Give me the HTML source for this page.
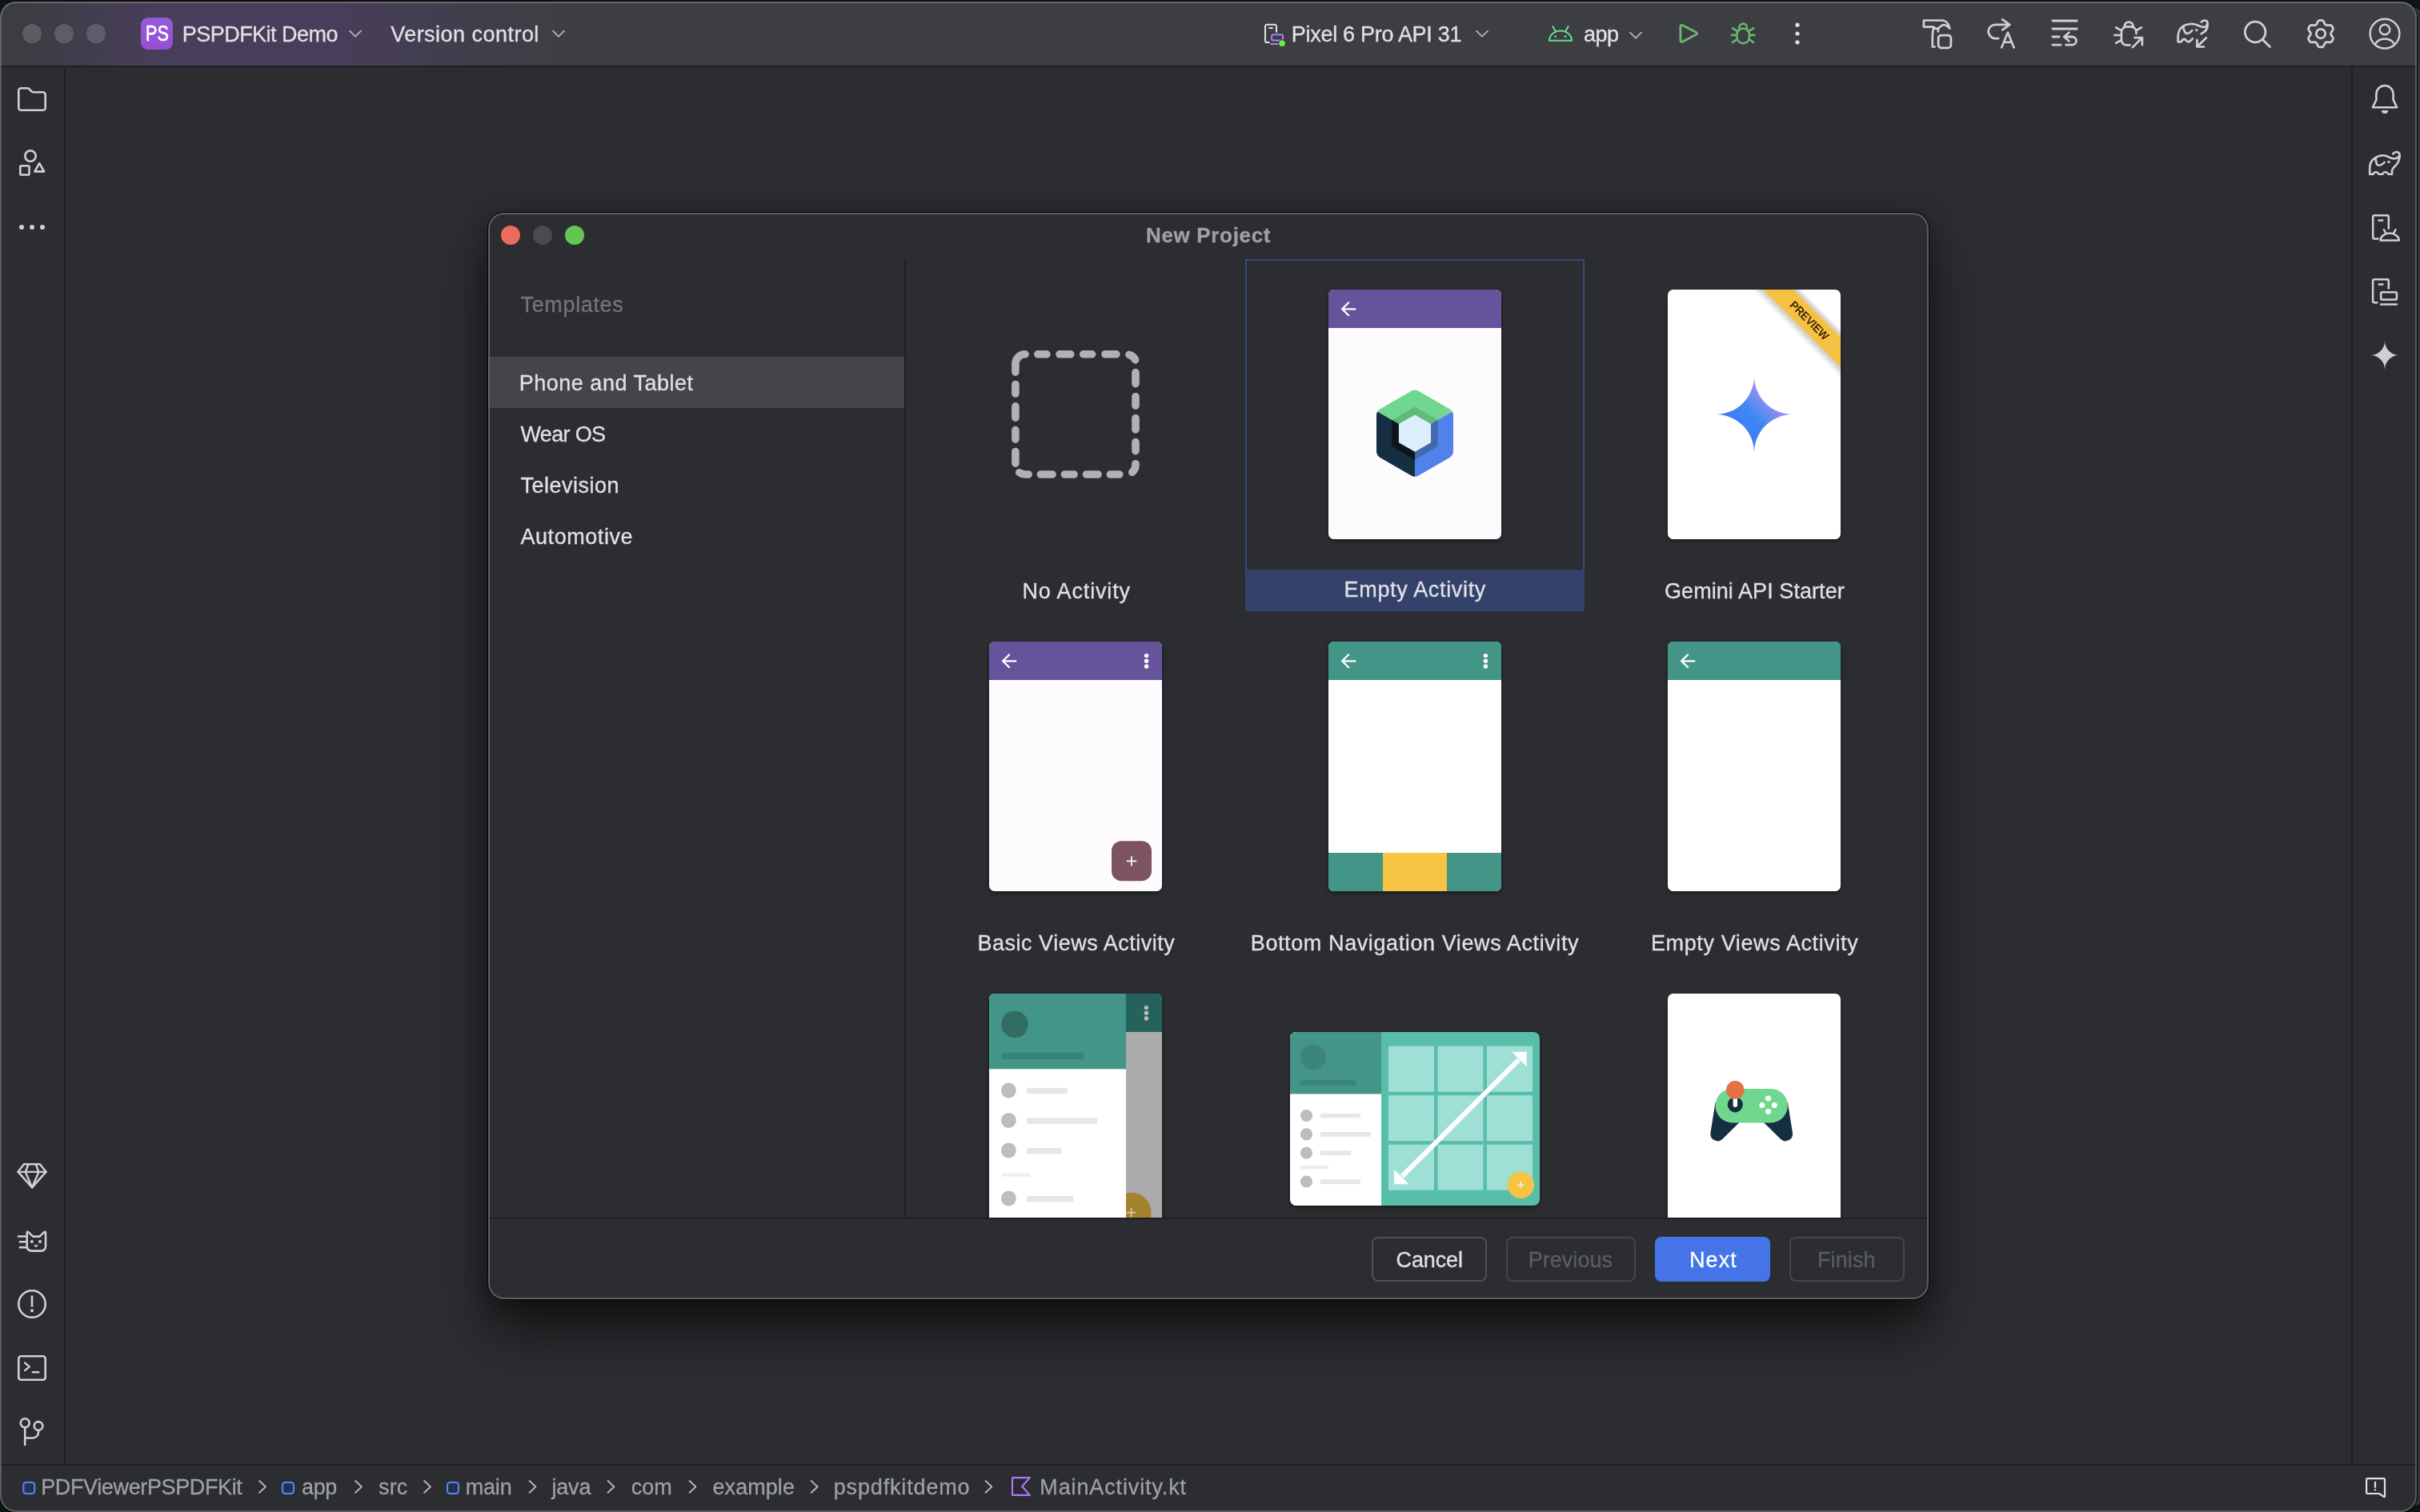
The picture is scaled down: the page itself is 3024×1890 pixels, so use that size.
<!DOCTYPE html>
<html><head><meta charset="utf-8"><title>New Project</title>
<style>
*{box-sizing:border-box;margin:0;padding:0}
html,body{width:3024px;height:1890px;overflow:hidden;background:#0c1713;font-family:"Liberation Sans",sans-serif}
.abs{position:absolute}
#win{position:absolute;left:0;top:2px;width:3020px;height:1888px;background:#2B2D30;border-radius:20px;overflow:hidden}
#winb{position:absolute;left:0;top:2px;width:3020px;height:1888px;border-radius:20px;box-shadow:inset 0 0 0 2px rgba(140,140,143,.5),inset 0 1.5px 0 rgba(255,255,255,.10);pointer-events:none}
#rightedge{position:absolute;left:3012px;top:8px;width:20px;height:1876px;border-radius:0 22px 22px 0;background:#323335;box-shadow:inset -1px 0 0 #000}
#tb{position:absolute;left:0;top:0;width:3020px;height:80px;background:
 linear-gradient(90deg,#3B3C40 0,#3D3C43 40px,#423D4E 110px,#473E59 190px,#483E5C 260px,#483E5B 400px,#453E55 480px,#413E4C 580px,#3E3E45 680px,#3C3E41 780px,#3C3E41 100%)}
#tbl{position:absolute;left:0;top:80px;width:3020px;height:2px;background:#1E1F22}
.vl{position:absolute;width:2px;background:#1E1F22}
.hl{position:absolute;height:2px;background:#1E1F22}
.tl{position:absolute;width:24px;height:24px;border-radius:50%}
.t{position:absolute;white-space:pre;line-height:1;-webkit-text-stroke-width:.3px}
#dlg{position:absolute;left:610px;top:266px;width:1800px;height:1358px;border-radius:20px;background:#2B2D30;
 box-shadow:0 0 0 1px #050506,0 40px 66px -4px rgba(0,0,0,.62),0 4px 28px rgba(0,0,0,.30);overflow:hidden}
#dlgb{position:absolute;left:610px;top:266px;width:1800px;height:1358px;border-radius:20px;box-shadow:inset 0 0 0 2px rgba(135,136,140,.55);pointer-events:none}
.btn{position:absolute;top:1546px;height:56px;border-radius:8px;border:2px solid #4E5157}
#ic{position:absolute;left:0;top:0;width:3024px;height:1890px;pointer-events:none}
#root{position:relative;width:3024px;height:1890px;overflow:hidden;background:#0c1713}
</style></head><body>
<div id="root">
<div id="rightedge"></div>
<div class="abs" style="left:-1.2px;top:.8px;width:3022.6px;height:1891px;border-radius:21.5px;background:#000"></div>
<div id="win">
  <div id="tb"></div><div id="tbl"></div>
  <!-- sidebars / status bar separators (coords relative to #win: y-2) -->
  <div class="vl" style="left:80px;top:82px;height:1746px"></div>
  <div class="vl" style="left:2938px;top:82px;height:1746px"></div>
  <div class="hl" style="left:0;top:1828px;width:3020px"></div>
</div>
<div id="winb"></div>
<!-- main window traffic lights -->
<div class="tl" style="left:28px;top:30px;background:#5d5c62"></div>
<div class="tl" style="left:68px;top:30px;background:#5f5c66"></div>
<div class="tl" style="left:108px;top:30px;background:#615c69"></div>
<!-- PS badge -->
<div class="abs" style="left:176px;top:22px;width:40px;height:40px;border-radius:9px;background:linear-gradient(180deg,#955ADB,#964FD4)"></div>

<!-- dialog -->
<div id="dlg">
  <div class="abs" style="left:0;top:180px;width:520px;height:64px;background:#43454A"></div>
  <div class="vl" style="left:520px;top:58px;height:1198px"></div>
  <div class="hl" style="left:0;top:1256px;width:1800px"></div>
  <!-- selected tile -->
  <div class="abs" style="left:946px;top:58px;width:424px;height:390px;border:2px solid #36497B"></div>
  <div class="abs" style="left:946px;top:446px;width:424px;height:52px;background:#34426B"></div>
</div>
<div id="dlgb"></div>
<div class="tl" style="left:626px;top:282px;background:#ED6A5E"></div>
<div class="tl" style="left:666px;top:282px;background:#4A4B4E"></div>
<div class="tl" style="left:706px;top:282px;background:#62C554"></div>
<!-- buttons -->
<div class="btn" style="left:1714px;width:144px"></div>
<div class="btn" style="left:1882px;width:162px;border-color:#45474C"></div>
<div class="btn" style="left:2068px;width:144px;background:#4574E8;border-color:#4574E8"></div>
<div class="btn" style="left:2236px;width:144px;border-color:#45474C"></div>
<div id="txt" style="position:absolute;left:0;top:0;width:3024px;height:1890px;will-change:transform">
<span class="t" style="left:227.7px;top:30.0px;font-size:27px;font-weight:400;color:#DFE1E5;letter-spacing:-0.52px">PSPDFKit Demo</span>
<span class="t" style="left:488.2px;top:30.0px;font-size:27px;font-weight:400;color:#DFE1E5;letter-spacing:0.47px">Version control</span>
<span class="t" style="left:1613.8px;top:30.0px;font-size:27px;font-weight:400;color:#DFE1E5;letter-spacing:-0.29px">Pixel 6 Pro API 31</span>
<span class="t" style="left:1979.0px;top:30.0px;font-size:27px;font-weight:400;color:#DFE1E5;letter-spacing:-0.53px">app</span>
<span class="t" style="left:1432.0px;top:280.9px;font-size:26px;font-weight:700;color:#9EA0A4;letter-spacing:0.66px">New Project</span>
<span class="t" style="left:650.6px;top:368.0px;font-size:27px;font-weight:400;color:#737579;letter-spacing:0.63px">Templates</span>
<span class="t" style="left:648.8px;top:466.0px;font-size:27px;font-weight:400;color:#DFE1E5;letter-spacing:0.50px">Phone and Tablet</span>
<span class="t" style="left:650.5px;top:530.0px;font-size:27px;font-weight:400;color:#DFE1E5;letter-spacing:-0.67px">Wear OS</span>
<span class="t" style="left:650.5px;top:594.0px;font-size:27px;font-weight:400;color:#DFE1E5;letter-spacing:0.49px">Television</span>
<span class="t" style="left:650.5px;top:658.0px;font-size:27px;font-weight:400;color:#DFE1E5;letter-spacing:0.55px">Automotive</span>
<span class="t" style="left:1277.5px;top:726.0px;font-size:27px;font-weight:400;color:#DFE1E5;letter-spacing:0.85px">No Activity</span>
<span class="t" style="left:1679.6px;top:724.0px;font-size:27px;font-weight:400;color:#DFE1E5;letter-spacing:0.67px">Empty Activity</span>
<span class="t" style="left:2080.0px;top:726.0px;font-size:27px;font-weight:400;color:#DFE1E5;letter-spacing:0.07px">Gemini API Starter</span>
<span class="t" style="left:1221.6px;top:1166.0px;font-size:27px;font-weight:400;color:#DFE1E5;letter-spacing:0.50px">Basic Views Activity</span>
<span class="t" style="left:1562.8px;top:1166.0px;font-size:27px;font-weight:400;color:#DFE1E5;letter-spacing:0.60px">Bottom Navigation Views Activity</span>
<span class="t" style="left:2063.0px;top:1166.0px;font-size:27px;font-weight:400;color:#DFE1E5;letter-spacing:0.61px">Empty Views Activity</span>
<span class="t" style="left:1744.6px;top:1562.0px;font-size:27px;font-weight:400;color:#DFE1E5;letter-spacing:-0.15px">Cancel</span>
<span class="t" style="left:1909.7px;top:1562.0px;font-size:27px;font-weight:400;color:#5A5D63;letter-spacing:0.04px">Previous</span>
<span class="t" style="left:2111.0px;top:1562.0px;font-size:27px;font-weight:400;color:#FFFFFF;letter-spacing:1.06px">Next</span>
<span class="t" style="left:2270.9px;top:1562.0px;font-size:27px;font-weight:400;color:#5A5D63;letter-spacing:0.13px">Finish</span>
<span class="t" style="left:51.2px;top:1846.4px;font-size:27px;font-weight:400;color:#9DA0A8;letter-spacing:-0.37px">PDFViewerPSPDFKit</span>
<span class="t" style="left:377.0px;top:1846.4px;font-size:27px;font-weight:400;color:#9DA0A8;letter-spacing:-0.33px">app</span>
<span class="t" style="left:473.0px;top:1846.4px;font-size:27px;font-weight:400;color:#9DA0A8;letter-spacing:0.15px">src</span>
<span class="t" style="left:581.7px;top:1846.4px;font-size:27px;font-weight:400;color:#9DA0A8;letter-spacing:-0.18px">main</span>
<span class="t" style="left:689.5px;top:1846.4px;font-size:27px;font-weight:400;color:#9DA0A8;letter-spacing:-0.21px">java</span>
<span class="t" style="left:788.7px;top:1846.4px;font-size:27px;font-weight:400;color:#9DA0A8;letter-spacing:-0.01px">com</span>
<span class="t" style="left:890.5px;top:1846.4px;font-size:27px;font-weight:400;color:#9DA0A8;letter-spacing:0.06px">example</span>
<span class="t" style="left:1041.7px;top:1846.4px;font-size:27px;font-weight:400;color:#9DA0A8;letter-spacing:0.85px">pspdfkitdemo</span>
<span class="t" style="left:1299.3px;top:1846.4px;font-size:27px;font-weight:400;color:#9DA0A8;letter-spacing:0.87px">MainActivity.kt</span>
<span class="t" style="left:181.8px;top:29.3px;font-size:27px;font-weight:400;color:#fff;-webkit-text-stroke:.7px #fff;transform-origin:0 0;transform:scaleX(.8)">PS</span>
</div>
<svg id="ic" viewBox="0 0 3024 1890" fill="none" stroke-linecap="round" stroke-linejoin="round">
<defs>
<clipPath id="cp"><rect x="0" y="0" width="216" height="312" rx="7"/></clipPath>
<clipPath id="cpl"><rect x="0" y="0" width="312" height="217" rx="8"/></clipPath>
<clipPath id="cpv"><rect x="1132" y="324" width="1278" height="1198"/></clipPath>
<linearGradient id="gem" x1="0" y1="1" x2="1" y2="0"><stop offset=".2" stop-color="#3B76F5"/><stop offset=".5" stop-color="#4189F2"/><stop offset=".7" stop-color="#9A8EF3"/><stop offset="1" stop-color="#AD8DF4"/></linearGradient>
<linearGradient id="rsh" gradientUnits="userSpaceOnUse" x1="167.5" y1="48.5" x2="160.5" y2="55.5"><stop offset="0" stop-color="#000" stop-opacity=".20"/><stop offset="1" stop-color="#000" stop-opacity="0"/></linearGradient>
<linearGradient id="rsh2" gradientUnits="userSpaceOnUse" x1="186.5" y1="29.5" x2="191.5" y2="24.5"><stop offset="0" stop-color="#223" stop-opacity=".26"/><stop offset="1" stop-color="#223" stop-opacity="0"/></linearGradient>
<filter id="ds" x="-10%" y="-10%" width="120%" height="120%"><feDropShadow dx="0" dy="2" stdDeviation="2.5" flood-color="#000" flood-opacity=".45"/></filter>
<mask id="hm"><polygon points="108.0,134.6 147.0,157.1 147.0,202.1 108.0,224.6 69.0,202.1 69.0,157.1" fill="#fff" stroke="#fff" stroke-width="18" stroke-linejoin="round"/></mask>
</defs>
<g transform="translate(1264,438)" stroke="#AFB1B3" stroke-width="9.6" stroke-linecap="round" fill="none">
<path d="M32.9,4.8H43.9M60,4.8H73.8M89.7,4.8H100.6M116.9,4.8H130.9M147,5.4A12,12 0 0 1 154.6,11.8M155,27.6V41.6M155,57.7V69M155,84.7V98.9M155,114.6V125.7M155,141.7V143.2A12,12 0 0 1 150.8,152.3M123.4,155H134.8M93.5,155H108.1M66.4,155H78.1M36.4,155H51M9.8,152.7A12,12 0 0 0 16.8,155H21.1M4.9,126.5V141.2M4.9,99.6V111.1M4.9,69.8V84.2M4.9,42.5V54M4.9,27.1V16.8A12,12 0 0 1 16.9,4.8H17"/></g>
<g transform="translate(1660,362)" filter="url(#ds)"><g clip-path="url(#cp)">
<rect width="216" height="312" fill="#FEFBFF"/><rect width="216" height="48" fill="#65539C"/><path d="M34.3,24.3H17.8M25.7,15.8L17.2,24.3L25.7,32.8" stroke="#fff" stroke-width="2.3" stroke-linecap="butt" stroke-linejoin="miter"/>
<g mask="url(#hm)">
<polygon points="108.0,179.6 38.7,139.6 108.0,99.6 177.3,139.6" fill="#70D78F"/>
<polygon points="108.0,179.6 108.0,259.6 38.7,219.6 38.7,139.6" fill="#132D42"/>
<polygon points="108.0,179.6 177.3,139.6 177.3,219.6 108.0,259.6" fill="#5181EB"/>
<polygon points="108.0,179.6 79.4,163.1 108.0,146.6 136.6,163.1" fill="#62B978"/>
<polygon points="108.0,179.6 108.0,212.6 79.4,196.1 79.4,163.1" fill="#07161D"/>
<polygon points="108.0,179.6 136.6,163.1 136.6,196.1 108.0,212.6" fill="#4369AC"/>
<polygon points="108.0,157.3 127.3,168.4 127.3,190.8 108.0,201.9 88.7,190.8 88.7,168.4" fill="#DCEEFC" stroke="#DCEEFC" stroke-width="1.5" stroke-linejoin="round"/>
</g>
</g></g>
<g transform="translate(2084,362)" filter="url(#ds)"><g clip-path="url(#cp)">
<rect width="216" height="312" fill="#fff"/>
<path transform="translate(108,156)" d="M0,-48A48,48 0 0 0 48,0A48,48 0 0 0 0,48A48,48 0 0 0 -48,0A48,48 0 0 0 0,-48Z" fill="url(#gem)"/>
<polygon points="119,0 216,97 216,111 105,0" fill="url(#rsh)"/>
<polygon points="157,0 216,59 216,49 167,0" fill="url(#rsh2)"/>
<polygon points="157,0 216,59 216,97 119,0" fill="#F5C142"/>
<text transform="translate(177.2,38.4) rotate(45)" text-anchor="middle" y="5.2" font-family="Liberation Sans, sans-serif" font-size="14.5" font-weight="700" fill="#3A2C04" stroke="none" textLength="62" lengthAdjust="spacingAndGlyphs">PREVIEW</text>
</g></g>
<g transform="translate(1236,802)" filter="url(#ds)"><g clip-path="url(#cp)">
<rect width="216" height="312" fill="#FEFBFF"/><rect width="216" height="48" fill="#65539C"/><path d="M34.3,24.3H17.8M25.7,15.8L17.2,24.3L25.7,32.8" stroke="#fff" stroke-width="2.3" stroke-linecap="butt" stroke-linejoin="miter"/><circle cx="196.6" cy="17.6" r="2.7" fill="#fff"/><circle cx="196.6" cy="24.3" r="2.7" fill="#fff"/><circle cx="196.6" cy="31" r="2.7" fill="#fff"/>
<rect x="153" y="249.2" width="50" height="50" rx="12.5" fill="#7D5260"/>
<path d="M171.8,274.4H184.2M178,268.2V280.6" stroke="#fff" stroke-width="1.7" stroke-linecap="butt"/>
</g></g>
<g transform="translate(1660,802)" filter="url(#ds)"><g clip-path="url(#cp)">
<rect width="216" height="312" fill="#fff"/><rect width="216" height="48" fill="#439587"/><path d="M34.3,24.3H17.8M25.7,15.8L17.2,24.3L25.7,32.8" stroke="#fff" stroke-width="2.3" stroke-linecap="butt" stroke-linejoin="miter"/><circle cx="196.4" cy="17.6" r="2.7" fill="#fff"/><circle cx="196.4" cy="24.3" r="2.7" fill="#fff"/><circle cx="196.4" cy="31" r="2.7" fill="#fff"/>
<rect y="264" width="216" height="48" fill="#439587"/><rect x="68" y="264" width="80" height="48" fill="#F4C443"/>
</g></g>
<g transform="translate(2084,802)" filter="url(#ds)"><g clip-path="url(#cp)">
<rect width="216" height="312" fill="#fff"/><rect width="216" height="48" fill="#439587"/><path d="M34.3,24.3H17.8M25.7,15.8L17.2,24.3L25.7,32.8" stroke="#fff" stroke-width="2.3" stroke-linecap="butt" stroke-linejoin="miter"/>
</g></g>
<g clip-path="url(#cpv)">
<g transform="translate(1236,1242)" filter="url(#ds)"><g clip-path="url(#cp)">
<rect width="216" height="312" fill="#ABABAB"/><rect x="171" width="45" height="48" fill="#28625B"/><circle cx="196.4" cy="17.6" r="2.7" fill="#B9BDBC"/><circle cx="196.4" cy="24.3" r="2.7" fill="#B9BDBC"/><circle cx="196.4" cy="31" r="2.7" fill="#B9BDBC"/>
<circle cx="177.6" cy="273.7" r="25" fill="#A5832D"/><path d="M171.8,273.7H183.4M177.6,267.9V279.5" stroke="#D9CFAE" stroke-width="1.6" stroke-linecap="butt"/>
<rect width="171" height="312" fill="#fff"/><rect width="171" height="94.3" fill="#439587"/>
<circle cx="32" cy="38.5" r="16.8" fill="#306D65"/><rect x="15" y="74.2" width="103" height="7.8" fill="#3A8277"/>
<circle cx="24.4" cy="121" r="9.4" fill="#BDBDBD"/><rect x="47.2" y="117.9" width="50.4" height="7.3" fill="#E6E6E6"/>
<circle cx="24.4" cy="158.5" r="9.4" fill="#BDBDBD"/><rect x="47.2" y="155.4" width="88" height="7.3" fill="#E6E6E6"/>
<circle cx="24.4" cy="196" r="9.4" fill="#BDBDBD"/><rect x="47.2" y="192.9" width="43" height="7.3" fill="#E6E6E6"/>
<circle cx="24.4" cy="256" r="9.4" fill="#BDBDBD"/><rect x="47.2" y="252.9" width="58" height="7.3" fill="#E6E6E6"/>
<rect x="16.6" y="224.3" width="35.3" height="4.4" fill="#F0F0F0"/>
</g></g>
<g transform="translate(1612,1290)" filter="url(#ds)"><g clip-path="url(#cpl)">
<rect width="312" height="217" fill="#59BDA9"/>
<rect x="123" y="17.7" width="57" height="57" fill="#9EE0D5"/>
<rect x="123" y="79.2" width="57" height="57" fill="#9EE0D5"/>
<rect x="123" y="140.7" width="57" height="57" fill="#9EE0D5"/>
<rect x="184.5" y="17.7" width="57" height="57" fill="#9EE0D5"/>
<rect x="184.5" y="79.2" width="57" height="57" fill="#9EE0D5"/>
<rect x="184.5" y="140.7" width="57" height="57" fill="#9EE0D5"/>
<rect x="246" y="17.7" width="57" height="57" fill="#9EE0D5"/>
<rect x="246" y="79.2" width="57" height="57" fill="#9EE0D5"/>
<rect x="246" y="140.7" width="57" height="57" fill="#9EE0D5"/>
<rect width="114" height="217" fill="#fff"/><rect width="114" height="77.4" fill="#439587"/>
<circle cx="28.9" cy="31.5" r="16" fill="#3A857A"/><rect x="12.9" y="59.7" width="69.1" height="7.4" fill="#3A857A"/>
<circle cx="20.5" cy="104.5" r="7.6" fill="#BDBDBD"/><rect x="38" y="101.7" width="49.9" height="5.7" fill="#E6E6E6"/>
<circle cx="20.5" cy="127.9" r="7.6" fill="#BDBDBD"/><rect x="38" y="125.10000000000001" width="63" height="5.7" fill="#E6E6E6"/>
<circle cx="20.5" cy="151.1" r="7.6" fill="#BDBDBD"/><rect x="38" y="148.29999999999998" width="38.3" height="5.7" fill="#E6E6E6"/>
<circle cx="20.5" cy="187" r="7.6" fill="#BDBDBD"/><rect x="38" y="184.2" width="49.9" height="5.7" fill="#E6E6E6"/>
<rect x="12.9" y="167" width="35.1" height="4.4" fill="#EEE"/>
<path d="M140,180.4L285.8,34.7" stroke="#fff" stroke-width="6" stroke-linecap="butt"/>
<polygon points="295.7,24.8 277.1,24.8 295.7,43.3" fill="#fff"/><polygon points="130.1,190.3 130.1,171.9 148.7,190.3" fill="#fff"/>
<circle cx="288.3" cy="191.3" r="16.7" fill="#F4C443"/><path d="M284,191.3H292.6M288.3,187V195.6" stroke="#fff" stroke-width="1.2" stroke-linecap="butt"/>
</g></g>
<g transform="translate(2084,1242)" filter="url(#ds)"><g clip-path="url(#cp)">
<rect width="216" height="312" fill="#fff"/>
<path d="M59.5,136L53.4,174.2A9,9 0 0 0 68.7,181.6L90,160.5V136Z" fill="#132D42"/>
<path d="M149.9,136L156,174.2A9,9 0 0 1 140.7,181.6L119.4,160.5V136Z" fill="#132D42"/>
<rect x="59.5" y="118.9" width="90.4" height="42.5" rx="21.25" fill="#70D78F"/>
<circle cx="84.3" cy="138.8" r="9.6" fill="#132D42"/>
<rect x="81.6" y="125" width="5.4" height="17" rx="2.7" fill="#fff"/>
<circle cx="84.3" cy="120.4" r="11.3" fill="#E57244"/>
<circle cx="125.5" cy="131" r="3.5" fill="#fff"/>
<circle cx="117.9" cy="139.4" r="3.5" fill="#fff"/>
<circle cx="133.3" cy="139.4" r="3.5" fill="#fff"/>
<circle cx="125.5" cy="147.2" r="3.5" fill="#fff"/>
</g></g>
</g>
<g stroke="#CED0D6" stroke-width="2.6" fill="none">
<path d="M23.3,113.3a3,3 0 0 1 3,-3h8.2a2.4,2.4 0 0 1 1.7,.7l3.6,3.6a2.4,2.4 0 0 0 1.7,.7h12.2a3,3 0 0 1 3,3v16.4a3,3 0 0 1 -3,3h-27.4a3,3 0 0 1 -3,-3z"/>
<circle cx="38" cy="195" r="6.7"/><rect x="25.3" y="207.3" width="11.2" height="11.2" rx="1.3"/><path d="M49.2,204.2L43.3,214.4H55.1Z"/>
<g fill="#CED0D6" stroke="none"><circle cx="27" cy="284" r="3"/><circle cx="40" cy="284" r="3"/><circle cx="53" cy="284" r="3"/></g>
<path d="M29.9,1455.3H49.8L57.6,1464.7L40.1,1484.4L22.5,1464.7Z" stroke-width="2.5"/><path d="M22.5,1464.9H57.6M35.5,1455.3L31.8,1465L40.1,1484.2M44.7,1455.3L48.4,1465L40.1,1484.2" stroke-width="2.4"/>
<path d="M33.7,1558V1541.3Q33.7,1538.6 35.8,1540.4L41.2,1545.6H49.5L54.9,1540.4Q57,1538.6 57,1541.3V1558A5.6,5.6 0 0 1 51.4,1563.6H39.3A5.6,5.6 0 0 1 33.7,1558Z"/>
<path d="M22.8,1545.4H32.5M24.8,1552.3H32.5M24.8,1559.3H32.5" stroke-width="2.5"/>
<g fill="#CED0D6" stroke="none"><circle cx="39.8" cy="1552" r="2"/><circle cx="50" cy="1552" r="2"/><path d="M41.9,1556.2H48L44.95,1559.6Z"/></g>
<circle cx="40" cy="1630" r="16.7"/><path d="M40,1620.5V1632.5"/><circle cx="40" cy="1638.3" r="2" fill="#CED0D6" stroke="none"/>
<rect x="23.3" y="1695.3" width="33.4" height="29.4" rx="3"/><path d="M31,1703.5L36.8,1708.3L31,1713.1M40.8,1715.2H48.4" stroke-width="2.4"/>
<circle cx="31.2" cy="1778.7" r="5.5"/><circle cx="48" cy="1782.4" r="5.3"/><path d="M31.2,1784.6V1806M48,1788V1790.5A7,7 0 0 1 41,1797.5H31.2"/>
<path d="M2964.9,134.2L2969.4,124.8V117.6A10.6,10.6 0 0 1 2990.6,117.6V124.8L2995.2,134.2Z"/>
<path d="M2975.9,138H2984.1A4.1,4.1 0 0 1 2975.9,138Z" fill="#CED0D6" stroke="none"/>
<path d="M2965.3,217.7H2961.2V210C2961.2,204.5 2963.5,200 2967.6,197.6C2972,194.4 2978,193.6 2982.5,195.2C2985.5,196.2 2987.5,198 2990.5,198.2C2994.5,198.4 2998.3,196.8 2998.6,194C2998.9,191.2 2996.3,189.8 2994,190C2992.3,190.2 2991,191.2 2990.3,192.3" />
<path d="M2998.6,194C2998.6,199.5 2997,203.5 2993.5,207C2990.5,209.8 2989,211 2989,214V217.7H2984.6Q2980.6,212.4 2977,217.7H2972.6Q2968.8,212.4 2965.3,217.7"/>
<path d="M2968.4,197.2C2968.6,200.5 2969.2,203.5 2970.2,205.6C2972.6,207.8 2976.6,206 2979.6,202.9"/>
<circle cx="2985" cy="202.4" r="1.7" fill="#CED0D6" stroke="none"/>
<path d="M2971.6,298.6H2967.2A2,2 0 0 1 2965.2,296.6V271.2A2,2 0 0 1 2967.2,269.2H2982.8A2,2 0 0 1 2984.8,271.2V285.6M2972.5,275.6H2977.3" stroke-width="2.5"/>
<path d="M2974.6,300.6A11.6,9 0 0 1 2997.8,300.6ZM2978.9,287.2L2981.6,292M2993.5,287.2L2990.8,292" stroke-width="2.5"/>
<path d="M2970.5,378.3H2967.1A2,2 0 0 1 2965.1,376.3V351.2A2,2 0 0 1 2967.1,349.2H2982.8A2,2 0 0 1 2984.8,351.2V360.5M2972.6,355.4H2977.4" stroke-width="2.5"/>
<rect x="2975.2" y="365.2" width="19.7" height="9.3" rx="1.5" stroke-width="2.6"/><path d="M2975.2,380.5H2994.9" stroke-width="2.5"/>
<path transform="translate(2980,444)" d="M0,-18A18,18 0 0 0 18,0A18,18 0 0 0 0,18A18,18 0 0 0 -18,0A18,18 0 0 0 0,-18Z" fill="#CED0D6" stroke="none"/>
</g>
<path d="M437,38.6L444,45.6L451,38.6" stroke="#B4B8BF" stroke-width="1.7"/>
<path d="M691,38.6L698,45.6L705,38.6" stroke="#B4B8BF" stroke-width="1.7"/>
<path d="M1845,38.6L1852,45.6L1859,38.6" stroke="#B4B8BF" stroke-width="1.7"/>
<path d="M2037,40.7L2044,47.7L2051,40.7" stroke="#B4B8BF" stroke-width="1.7"/>
<g stroke="#DFE1E5" stroke-width="2" fill="none"><path d="M1585.8,52.9H1583A2,2 0 0 1 1581,50.9V32.85A2,2 0 0 1 1583,30.85H1593A2,2 0 0 1 1595,32.85V40M1586.1,35H1589.9"/></g>
<g stroke="#B07EF7" stroke-width="2" fill="none"><rect x="1589.1" y="43.2" width="13.9" height="7.3" rx="2"/><path d="M1588,54.9H1598"/></g>
<circle cx="1602.1" cy="54.2" r="4.4" fill="#69EE50" stroke="#2E3A2E" stroke-width="1"/>
<g stroke="#6CDB93" stroke-width="2" fill="none"><path d="M1936,50.7A14,12.3 0 0 1 1964,50.7ZM1940.3,33L1943.8,39.3M1959.6,33L1956.2,39.3"/></g><circle cx="1943.6" cy="45.7" r="1.4" fill="#6CDB93"/><circle cx="1956.2" cy="45.7" r="1.4" fill="#6CDB93"/>
<path d="M2099.90,33.40Q2099.90,30.20 2102.74,31.68L2119.36,40.32Q2122.20,41.80 2119.36,43.28L2102.74,51.92Q2099.90,53.40 2099.90,50.20Z" stroke="#6BB56F" stroke-width="2.9" fill="none"/>
<g stroke="#6BB56F" stroke-width="2.6" fill="none"><rect x="2170.4" y="35.5" width="15.6" height="18.6" rx="7.8"/><path d="M2173.2,35.2A5,5.6 0 0 1 2183.2,35.2"/><path d="M2165,35.1L2170.6,38.8M2163.8,43.9H2170.2M2165,52.9L2170.6,49.2M2191.2,35.1L2185.6,38.8M2192.4,43.9H2186M2191.2,52.9L2185.6,49.2"/></g>
<g fill="#DFE1E5"><circle cx="2246" cy="31.2" r="2.6"/><circle cx="2246" cy="42" r="2.6"/><circle cx="2246" cy="52.8" r="2.6"/></g>
<g stroke="#CED0D6" stroke-width="2.8" fill="none">
<path d="M2403.9,25.5H2426.7C2432.1,25.5 2435.3,30.6 2436.4,35.7C2433.7,32.7 2430.5,30.4 2427.2,31.5C2425.1,32.2 2423.7,33.8 2421.9,35.7H2418.1L2416.2,33.7H2403.9ZM2416.5,33.9C2415.3,37.6 2414.8,41.9 2414.8,45.1V58.5H2417.6M2421.9,35.7V39.4" stroke-width="2.7"/>
<rect x="2422.2" y="44.1" width="15.7" height="15.7" rx="3.6"/>
<path d="M2511.2,30.85H2493.3A8.6,8.6 0 0 0 2493.3,48.05H2497.1M2502.2,24.4L2511.3,30.85L2502.2,37.3"/>
<path d="M2501.2,59.4L2508.9,40.6L2516.6,59.4M2504.2,52.7H2513.6" stroke-width="2.6"/>
<path d="M2564.9,26H2595.3M2564.9,36H2595.3M2564.9,46H2573M2564.9,56.1H2575.1M2579.4,46H2589.4A5.05,5.05 0 0 1 2589.4,56.1H2581.6M2585.4,40.8L2579.2,46L2585.4,51.3"/>
<path d="M2661.6,56.4H2657.5A6.6,6.6 0 0 1 2650.9,49.8V40A6.6,6.6 0 0 1 2657.5,33.4H2662.8A6.6,6.6 0 0 1 2669.4,40V41.9M2654.5,33.2A5.6,5.6 0 0 1 2665.7,33.2M2644.2,34.3L2651,38.3M2642.3,44H2650.6M2644.2,53.9L2651,49.9M2675.9,34.3L2669.5,38M2664.9,59.1L2676.7,47.2M2667.5,47.1H2676.9V56.1" stroke-width="2.7"/>
<path d="M2725.4,52.3H2721.6V46C2721.6,40 2724,35.2 2728,32.6C2733.5,29.2 2741,29.4 2746,31.5C2750,33.2 2752.6,34.8 2755.4,33.6C2758.6,32 2759.2,28.2 2757.6,26.5C2756,24.9 2753,25.2 2750.7,27.4M2758.7,29.5C2759,35 2756,40 2750.5,42.2M2728,33C2728.4,36 2729.4,39 2731,41.2C2733.5,42.6 2737,40.6 2739.2,38.2M2725.4,52.3C2726.6,50.3 2727.8,48.7 2729.4,48.8C2731.4,49 2732.2,52.3 2734.6,52.3C2737,52.3 2738,50 2739.8,48.2M2756.9,47.3L2745.6,58.3M2745.4,49.9V58.5H2753.9" stroke-width="2.7"/>
<circle cx="2744.8" cy="37.6" r="1.7" fill="#CED0D6" stroke="none"/>
<circle cx="2818.1" cy="40" r="12.8"/><path d="M2827.6,49.7L2836.4,58.5"/>
<path d="M2896.48,26.76Q2897.19,25.33 2898.79,25.33L2901.21,25.33Q2902.81,25.33 2903.52,26.76L2905.28,30.28Q2906.00,31.71 2907.60,31.61L2911.52,31.38Q2913.12,31.29 2913.92,32.67L2915.12,34.76Q2915.92,36.15 2915.04,37.48L2912.88,40.76Q2912.00,42.10 2912.88,43.44L2915.04,46.72Q2915.92,48.05 2915.12,49.44L2913.92,51.53Q2913.12,52.91 2911.52,52.82L2907.60,52.59Q2906.00,52.49 2905.28,53.92L2903.52,57.44Q2902.81,58.87 2901.21,58.87L2898.79,58.87Q2897.19,58.87 2896.48,57.44L2894.72,53.92Q2894.00,52.49 2892.40,52.59L2888.48,52.82Q2886.88,52.91 2886.08,51.53L2884.88,49.44Q2884.08,48.05 2884.96,46.72L2887.12,43.44Q2888.00,42.10 2887.12,40.76L2884.96,37.48Q2884.08,36.15 2884.88,34.76L2886.08,32.67Q2886.88,31.29 2888.48,31.38L2892.40,31.61Q2894.00,31.71 2894.72,30.28Z"/><circle cx="2900" cy="42.1" r="5.7"/>
<circle cx="2980" cy="42.1" r="18.4" stroke-width="2.4"/><circle cx="2980" cy="37" r="6.3" stroke-width="2.4"/><path d="M2967.9,55.2A14.3,14.3 0 0 1 2992.1,55.2" stroke-width="2.4"/>
</g>
<path d="M324.1,1851.1000000000001L331.9,1858.4L324.1,1865.7" stroke="#B0B3BB" stroke-width="2"/>
<path d="M444.1,1851.1000000000001L451.9,1858.4L444.1,1865.7" stroke="#B0B3BB" stroke-width="2"/>
<path d="M530.1,1851.1000000000001L537.9,1858.4L530.1,1865.7" stroke="#B0B3BB" stroke-width="2"/>
<path d="M661.6,1851.1000000000001L669.4,1858.4L661.6,1865.7" stroke="#B0B3BB" stroke-width="2"/>
<path d="M759.6,1851.1000000000001L767.4,1858.4L759.6,1865.7" stroke="#B0B3BB" stroke-width="2"/>
<path d="M861.6,1851.1000000000001L869.4,1858.4L861.6,1865.7" stroke="#B0B3BB" stroke-width="2"/>
<path d="M1013.7,1851.1000000000001L1021.5,1858.4L1013.7,1865.7" stroke="#B0B3BB" stroke-width="2"/>
<path d="M1231.5,1851.1000000000001L1239.3000000000002,1858.4L1231.5,1865.7" stroke="#B0B3BB" stroke-width="2"/>
<rect x="29.3" y="1853" width="14" height="14" rx="3.2" fill="#25324D" stroke="#548AF7" stroke-width="2"/>
<rect x="353" y="1853" width="14" height="14" rx="3.2" fill="#25324D" stroke="#548AF7" stroke-width="2"/>
<rect x="559" y="1853" width="14" height="14" rx="3.2" fill="#25324D" stroke="#548AF7" stroke-width="2"/>
<path d="M1265,1847.1H1286.8L1277.2,1858L1286.8,1868.9H1265Z" fill="#2D2636" stroke="#AC7AF7" stroke-width="2.1"/>
<path d="M2973.1,1867H2958.7A1.6,1.6 0 0 1 2957.1,1865.4V1849.8A1.6,1.6 0 0 1 2958.7,1848.2H2978.4A1.6,1.6 0 0 1 2980,1849.8V1870.2Q2980,1871.6 2978.8,1870.9Z" stroke="#DFE1E5" stroke-width="2.2" fill="none"/><path d="M2968,1852V1859.8M2968,1861.3V1863.3" stroke="#DFE1E5" stroke-width="2.2" stroke-linecap="butt"/>
</svg>
</div>
</body></html>
